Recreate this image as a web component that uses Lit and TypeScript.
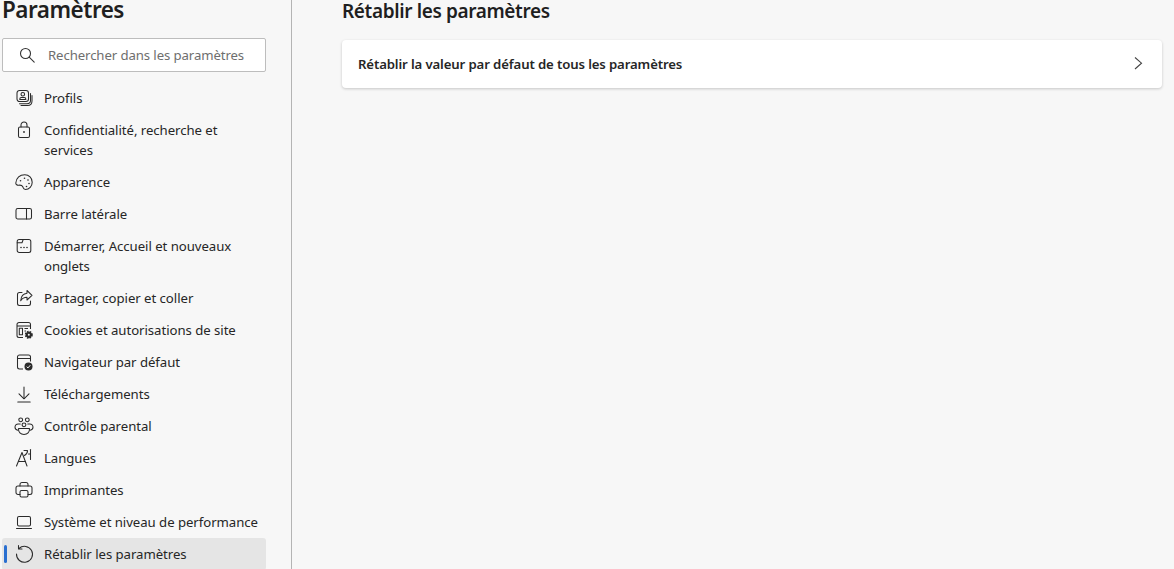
import { LitElement, html, css, svg } from "lit";
import { customElement } from "lit/decorators.js";

const s = (c: unknown) => html`<svg class="ic" viewBox="0 0 20 20" fill="none" stroke="#2b2b2b" stroke-width="1.05" stroke-linecap="round" stroke-linejoin="round">${c}</svg>`;

const items: { t: string; active?: boolean; i: unknown }[] = [
  { t: "Profils", i: s(svg`<rect x="3" y="2.500" width="11.500" height="11" rx="2.500"/><circle cx="8.800" cy="6.200" r="1.800"/><path d="M5.800 11.500v-.6c0-.9.700-1.400 1.500-1.400h3c.8 0 1.500.5 1.500 1.400v.6z"/><path d="M16.500 5.500v7c0 2-1.400 3.300-3.500 3.300H5.500"/><path d="M18 7.500v5.500c0 2.700-2 4.500-4.500 4.500H7"/>`) },
  { t: "Confidentialité, recherche et services", i: s(svg`<rect x="4.500" y="7" width="11" height="10.500" rx="1.500"/><path d="M7 7V5a3 3 0 0 1 6 0v2"/><circle cx="10" cy="12" r=".9" fill="#2b2b2b" stroke="none"/>`) },
  { t: "Apparence", i: s(svg`<path d="M1.800 11C2.500 6 6 2.800 10.800 2.800c4.200 0 7.400 3.200 7.400 7.400 0 4-3 7.300-6.800 7.300-2.300 0-2-1.500-2.600-2.700-.9-1.900-2.400-1.800-4-1.600-1.500.2-3.200-.5-3-2.200z"/><circle cx="6.500" cy="8.800" r=".8" fill="#2b2b2b" stroke="none"/><circle cx="10.500" cy="6.300" r=".8" fill="#2b2b2b" stroke="none"/><circle cx="14" cy="8" r=".8" fill="#2b2b2b" stroke="none"/><circle cx="15" cy="11.500" r=".8" fill="#2b2b2b" stroke="none"/><circle cx="12.500" cy="14.500" r=".8" fill="#2b2b2b" stroke="none"/>`) },
  { t: "Barre latérale", i: s(svg`<rect x="2" y="4.500" width="15.500" height="10.500" rx="1.800"/><path d="M12.500 4.500v10.500"/>`) },
  { t: "Démarrer, Accueil et nouveaux onglets", i: s(svg`<rect x="3.200" y="3.500" width="13.600" height="13" rx="2"/><path d="M3.200 6.800h4.800l1.200-3.300"/><circle cx="7" cy="11.500" r=".8" fill="#2b2b2b" stroke="none"/><circle cx="10" cy="11.500" r=".8" fill="#2b2b2b" stroke="none"/><circle cx="13" cy="11.500" r=".8" fill="#2b2b2b" stroke="none"/>`) },
  { t: "Partager, copier et coller", i: s(svg`<path d="M8 4.500H5.500a2 2 0 0 0-2 2v9a2 2 0 0 0 2 2h9a2 2 0 0 0 2-2V13"/><path d="M13 2.500l5 4.800-5 4.700V9.300c-3 0-4.800 1-6.300 3.400.3-4 2.600-7 6.300-7.400z"/>`) },
  { t: "Cookies et autorisations de site", i: html`<svg class="ic" viewBox="0 0 20 20" fill="none" stroke="#2b2b2b" stroke-width="1.05" stroke-linejoin="round"><path d="M9 17.500H5a2 2 0 0 1-2-2v-11a2 2 0 0 1 2-2h9.500a2 2 0 0 1 2 2V9"/><path d="M3 6h13.500"/><rect x="5.300" y="8.300" width="3.200" height="6.400"/><path d="M10.500 8.500H14"/><path d="M10.500 11H12"/><circle cx="14.800" cy="14.800" r="3.100" fill="#2b2b2b" stroke="#2b2b2b" stroke-width="1.800" stroke-dasharray="1.500 1"/><circle cx="14.800" cy="14.800" r="1" fill="#f7f7f7" stroke="none"/></svg>` },
  { t: "Navigateur par défaut", i: html`<svg class="ic" viewBox="0 0 20 20" fill="none" stroke="#2b2b2b" stroke-width="1.05" stroke-linejoin="round"><path d="M9 17H5.500a2 2 0 0 1-2-2V5a2 2 0 0 1 2-2h9a2 2 0 0 1 2 2v4.500"/><path d="M3.500 6.500h13"/><circle cx="14.500" cy="14.500" r="4" fill="#2b2b2b" stroke="none"/><path d="M12.700 14.700l1.300 1.200 2.300-2.700" stroke="#f7f7f7" stroke-width="1"/></svg>` },
  { t: "Téléchargements", i: s(svg`<path d="M10 3v11.500"/><path d="M5 9.800l5 5 5-5"/><path d="M3.800 18h12.400"/>`) },
  { t: "Contrôle parental", i: s(svg`<circle cx="6.700" cy="3.800" r="1.900"/><circle cx="13.300" cy="3.800" r="1.900"/><circle cx="10" cy="8.800" r="1.900"/><path d="M3.800 14.200c-1.600-.3-2.800-1.300-2.800-2.900 0-2 1.300-3.300 3.200-3.300h2"/><path d="M16.200 14.200c1.600-.3 2.800-1.300 2.800-2.900 0-2-1.300-3.300-3.200-3.300h-2"/><path d="M4.500 12.500h11c.3 3.800-2.200 6-5.500 6s-5.800-2.200-5.500-6z"/>`) },
  { t: "Langues", i: s(svg`<path d="M2.500 18L8 4.500 13 18"/><path d="M4.500 13.500h7"/><path d="M10 2.500h3.500c.3 2-1 3.500-3 5"/><path d="M16.500 1.500v10"/><path d="M14.500 6h2"/>`) },
  { t: "Imprimantes", i: s(svg`<path d="M6 6V4.500a2 2 0 0 1 2-2h4a2 2 0 0 1 2 2V6"/><path d="M6 14.500H4a2 2 0 0 1-2-2V8a2 2 0 0 1 2-2h12a2 2 0 0 1 2 2v4.500a2 2 0 0 1-2 2h-2"/><rect x="6" y="10.500" width="8" height="6.500" rx="1.500"/>`) },
  { t: "Système et niveau de performance", i: s(svg`<rect x="3.500" y="4.500" width="13" height="9.500" rx="1.500"/><path d="M2.500 16.500h15"/>`) },
  { t: "Rétablir les paramètres", active: true, i: s(svg`<path d="M5 4.500A8 8 0 1 1 2.500 10"/><path d="M4.500 1.500v3.500H8"/>`) },
];

@customElement("app-root")
export class AppRoot extends LitElement {
  static styles = css`
    :host { display: block; height: 569px; overflow: hidden; background: #f7f7f7; color: #262626; font-family: "Noto Sans", "Open Sans", sans-serif; }
    .page { display: grid; grid-template-columns: 292px 1fr; height: 569px; }
    .side { border-right: 1px solid #b4b4b4; box-sizing: border-box; height: 569px; overflow: hidden; padding-left: 2px; }
    h1 { margin: -6px 0 0 0; font-size: 22.5px; line-height: 32px; font-weight: 600; color: #1f1f1f; letter-spacing: -0.5px; }
    .search { box-sizing: border-box; width: 264px; height: 34px; margin-top: 12px; background: #fff; border: 1px solid #bdbdbd; border-radius: 2px; display: flex; align-items: center; padding-left: 15px; color: #6e6e6e; font-size: 13.2px; letter-spacing: -0.1px; }
    .search svg { width: 18px; height: 18px; margin-right: 12px; flex: none; }
    .list { margin-top: 10px; width: 264px; }
    .row { position: relative; display: flex; align-items: flex-start; padding: 6px 0 6px 12px; font-size: 13.2px; line-height: 20px; color: #262626; letter-spacing: -0.05px; }
    .row > span { padding-right: 2px; }
    .row.active { background: #e5e5e5; border-radius: 3px; }
    .row.active::before { content: ""; position: absolute; left: 2px; top: 7px; width: 3px; height: 18px; background: #2a6fd0; border-radius: 2px; }
    .ic { width: 20px; height: 20px; margin-right: 10px; flex: none; }
    .main { padding: 0 12px 0 50px; }
    h2 { margin: -3px 0 0; font-size: 19px; line-height: 28px; font-weight: 600; color: #1f1f1f; letter-spacing: -0.37px; }
    .card { box-sizing: border-box; height: 48px; margin-top: 15px; background: #fff; border-radius: 4px; box-shadow: 0 1px 3px rgba(0,0,0,.2); display: flex; align-items: center; justify-content: space-between; padding: 0 16px; font-size: 13.2px; font-weight: 600; color: #262626; letter-spacing: -0.13px; }
    .card svg { width: 16px; height: 16px; }
  `;

  render() {
    return html`<div class="page">
      <aside class="side">
        <h1>Paramètres</h1>
        <div class="search">
          <svg viewBox="0 0 18 18" fill="none" stroke="#333" stroke-width="1.1" stroke-linecap="round"><circle cx="7.500" cy="7.500" r="5"/><path d="M11.200 11.200l5 5"/></svg>
          <span>Rechercher dans les paramètres</span>
        </div>
        <nav class="list">
          ${items.map((it) => html`<div class="row ${it.active ? "active" : ""}">${it.i}<span>${it.t}</span></div>`)}
        </nav>
      </aside>
      <main class="main">
        <h2>Rétablir les paramètres</h2>
        <div class="card">
          <span>Rétablir la valeur par défaut de tous les paramètres</span>
          <svg viewBox="0 0 16 16" fill="none" stroke="#444" stroke-width="1.1"><path d="M5 1.500L11.500 7.200 5 13"/></svg>
        </div>
      </main>
    </div>`;
  }
}
